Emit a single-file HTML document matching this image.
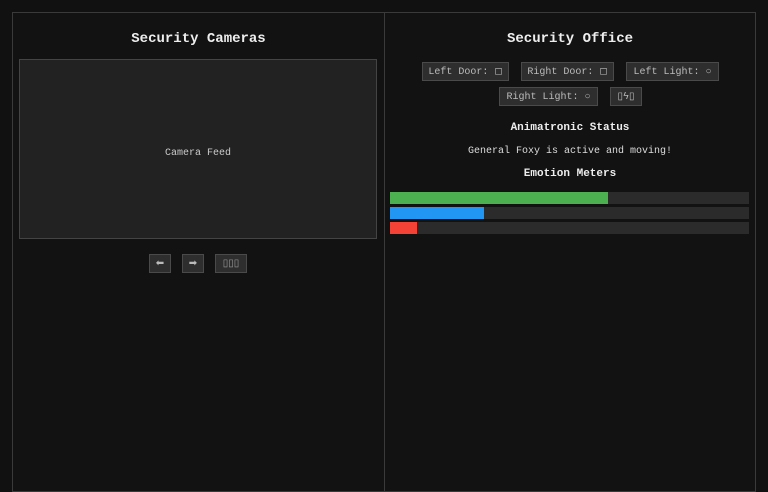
<!DOCTYPE html>
<html><head><meta charset="utf-8"><style>
*{margin:0;padding:0;box-sizing:border-box}
body{width:768px;height:480px;background:#111;font-family:"Liberation Mono",monospace;color:#ddd;position:relative;overflow:hidden}
.panel{position:absolute;top:12px;height:480px;border:1px solid #3a3a3a;background:#121212}
h2{position:absolute;width:100%;text-align:center;font-size:14px;font-weight:bold;color:#eee;top:18px}
.btn{position:absolute;height:19px;background:#2e2e2e;border:1px solid #4a4a4a;color:#bbb;font-size:10px;line-height:19px;text-align:center;white-space:nowrap}
.t{position:absolute;width:100%;text-align:center}
.bar{position:absolute;left:390px;width:359px;height:12px;background:#2b2b2b}
.bar div{height:100%}
</style></head><body>
<div class="panel" style="left:12px;width:373px"><h2>Security Cameras</h2></div>
<div class="panel" style="left:384px;width:372px"><h2>Security Office</h2></div>
<div style="position:absolute;left:19px;top:59px;width:358px;height:180px;background:#222;border:1px solid #444"></div>
<div style="position:absolute;left:19px;top:148px;width:358px;text-align:center;font-size:10px;color:#ccc">Camera Feed</div>
<div class="btn" style="left:149px;top:254px;width:22px">⬅</div>
<div class="btn" style="left:182px;top:254px;width:22px">➡</div>
<div class="btn" style="left:215px;top:254px;width:32px;color:#999">▯▯▯</div>

<div class="btn" style="left:422px;top:62px;width:87px">Left Door: ◻</div>
<div class="btn" style="left:521px;top:62px;width:93px">Right Door: ◻</div>
<div class="btn" style="left:626px;top:62px;width:93px">Left Light: ○</div>
<div class="btn" style="left:499px;top:87px;width:99px">Right Light: ○</div>
<div class="btn" style="left:610px;top:87px;width:32px">▯ϟ▯</div>

<div class="t" style="left:186px;top:122px;font-size:11px;font-weight:bold;color:#eee">Animatronic Status</div>
<div class="t" style="left:186px;top:146px;font-size:10px;color:#ddd">General Foxy is active and moving!</div>
<div class="t" style="left:186px;top:168px;font-size:11px;font-weight:bold;color:#eee">Emotion Meters</div>
<div class="bar" style="top:192px"><div style="width:218px;background:#4caf50"></div></div>
<div class="bar" style="top:207px"><div style="width:94px;background:#2196f3"></div></div>
<div class="bar" style="top:222px"><div style="width:27px;background:#f44336"></div></div>
</body></html>
